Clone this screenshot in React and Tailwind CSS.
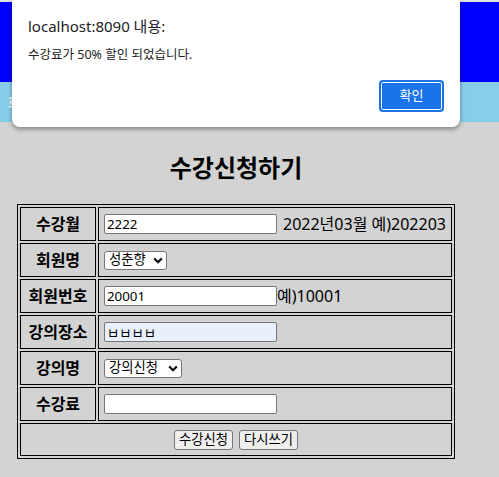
import React from 'react';

const FONT = { fontFamily: '"Noto Sans", "Noto Sans CJK KR", sans-serif' };

const Chevron = () => (
  <svg width="10" height="7" viewBox="0 0 10 7" className="shrink-0">
    <path d="M1.2 1.4 L5 5.2 L8.8 1.4" fill="none" stroke="#111" strokeWidth="2.2" />
  </svg>
);

const FakeSelect = ({ value, width }) => (
  <div
    className="h-[19px] flex items-center justify-between bg-white border border-[#767676] rounded-[3px] pl-[4px] pr-[3px] text-[13.33px] leading-none text-black"
    style={{ width }}
  >
    <span>{value}</span>
    <Chevron />
  </div>
);

const TextBox = ({ value = '', autofill = false }) => (
  <input
    readOnly
    value={value}
    className={`w-[173px] h-[20px] border border-[#767676] rounded-[2px] px-[2px] text-[13.33px] leading-none text-black ${autofill ? 'bg-[#e8f0fe]' : 'bg-white'}`}
  />
);

const Row = ({ label, children, h = 'h-[34px]' }) => (
  <tr>
    <td className={`border border-black w-[76px] ${h} text-center text-[16px] font-bold text-black p-0`}>{label}</td>
    <td className={`border border-black ${h} pl-[5px] p-0`}>
      <div className="flex items-center text-[16px] text-black">{children}</div>
    </td>
  </tr>
);

export default function App() {
  return (
    <div className="relative w-[499px] h-[477px] overflow-hidden bg-[#d3d3d3]" style={FONT}>
      <div className="h-[2px] bg-[#e3e3e3]" />
      <header className="h-[80px] bg-[#0000ff]" />
      <nav className="h-[40px] bg-[#87ceeb] flex items-center pl-[8px] text-[14px] text-white font-bold">
        회원등록
      </nav>

      <section className="ml-[17px] w-[438px] pt-[30px]">
        <h2 className="text-center text-[24px] leading-[32px] font-bold text-black">수강신청하기</h2>

        <table className="mt-[20px] w-[438px] border-separate border-spacing-[2px] border border-black">
          <tbody>
            <Row label="수강월">
              <TextBox value="2222" />
              <span className="ml-[6px]">2022년03월 예)202203</span>
            </Row>
            <Row label="회원명">
              <FakeSelect value="성춘향" width="63px" />
            </Row>
            <Row label="회원번호">
              <TextBox value="20001" />
              <span>예)10001</span>
            </Row>
            <Row label="강의장소">
              <TextBox value="ㅂㅂㅂㅂ" autofill />
            </Row>
            <Row label="강의명">
              <FakeSelect value="강의신청" width="78px" />
            </Row>
            <Row label="수강료">
              <TextBox />
            </Row>
            <tr>
              <td colSpan={2} className="border border-black h-[33px] p-0">
                <div className="flex items-center justify-center gap-[6px]">
                  <button className="h-[20px] px-[4px] bg-[#efefef] border border-[#767676] rounded-[3px] text-[13.33px] leading-none text-black">
                    수강신청
                  </button>
                  <button className="h-[20px] px-[4px] bg-[#efefef] border border-[#767676] rounded-[3px] text-[13.33px] leading-none text-black">
                    다시쓰기
                  </button>
                </div>
              </td>
            </tr>
          </tbody>
        </table>
      </section>

      {/* alert dialog */}
      <div className="absolute top-0 left-[12px] w-[448px] h-[127px] bg-white rounded-b-[8px] shadow-[0_2px_5px_rgba(0,0,0,0.4)] px-[16px] pt-[16px]">
        <div className="text-[15px] leading-[20px] text-[#202124]">localhost:8090 내용:</div>
        <div className="mt-[10px] text-[12.5px] leading-[18px] text-[#202124]">수강료가 50% 할인 되었습니다.</div>
        <div className="flex justify-end mt-[16px]">
          <button className="w-[65px] h-[32px] rounded-[4px] bg-[#1a73e8] text-white text-[13px] flex items-center justify-center ring-1 ring-inset ring-white border-2 border-[#1a73e8]">
            확인
          </button>
        </div>
      </div>
    </div>
  );
}
